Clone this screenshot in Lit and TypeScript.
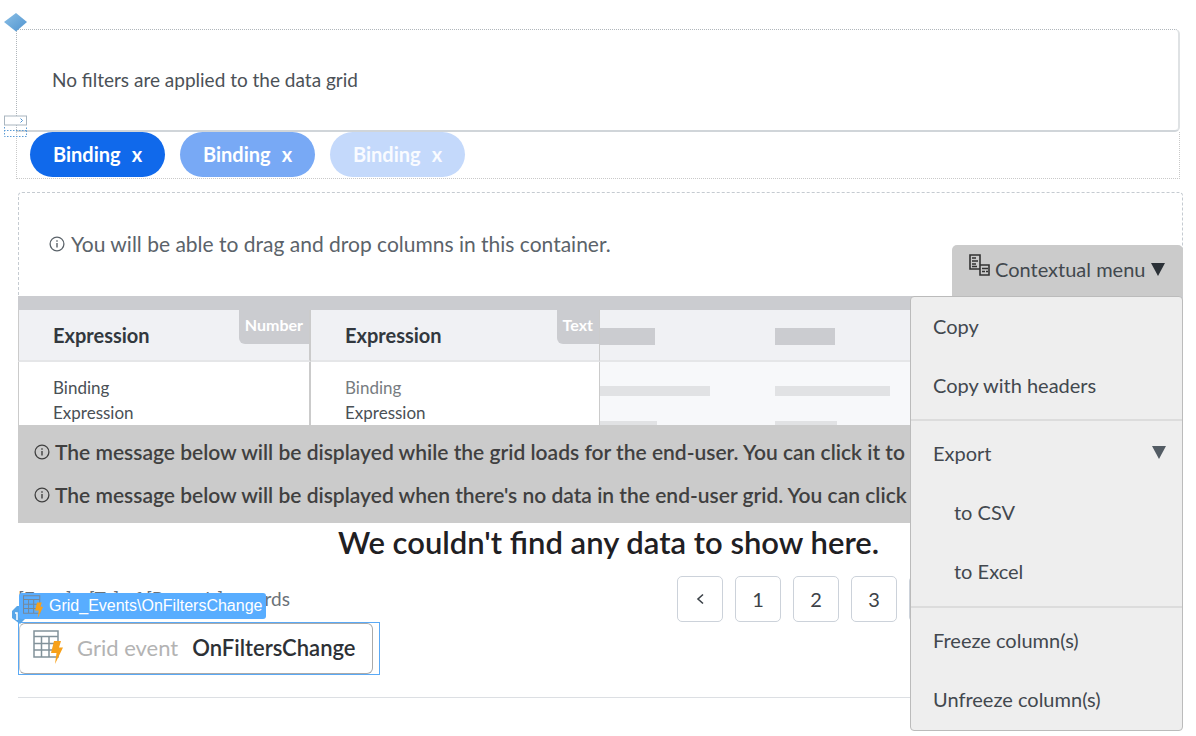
import { LitElement, html, css, svg } from "lit";
import { customElement } from "lit/decorators.js";

const infoIcon = html`<svg class="info" viewBox="0 0 16 16" aria-hidden="true">
  ${svg`<circle cx="8" cy="8" r="6.9" fill="none" stroke="currentColor" stroke-width="1.3"/>
  <path d="M8 7v4.6M8 4.2v1.5" stroke="currentColor" stroke-width="1.4"/>`}
</svg>`;

const gridEventIcon = (cls: string) => html`<svg class=${cls} viewBox="0 0 30 34" aria-hidden="true">
  ${svg`<path class="lines" d="M1 1H25V27H1ZM1 6.5H25M1 13.500H25M1 20H25M8.500 6.500V27M16 6.500V27" fill="none" stroke-width="1.5"/>
  <path d="M21 11H28L26 17.500H30L22 34L23.500 23H18Z" fill="#f7a11b" stroke="none"/>`}
</svg>`;

@customElement("filter-panel")
class FilterPanel extends LitElement {
  static styles = css`
    :host { display: block; position: relative; padding: 29px 16px 0 16px; }
    * { box-sizing: border-box; }
    .panel {
      height: 103px; padding: 0 35px 2px; display: flex; align-items: center;
      border: 1px dotted #b0b6bb; border-right: 2px solid #dfe2e4; border-bottom: 2px solid #d0d5d9;
      border-radius: 0 5px 5px 0; color: #4b5157; font-size: 19px;
    }
    .chips {
      display: flex; gap: 15px; padding: 0 13px; height: 47px;
      border: 1px dotted #c9c9c9; border-top: 0;
    }
    .chip {
      height: 45px; width: 135px; border: 0; border-radius: 23px; color: #fff;
      font: bold 20px "Lato", sans-serif; display: flex; align-items: center; gap: 11px;
      padding: 0 0 2px 23px; background: #1069eb;
    }
    .chip.mid { background: #78a9f5; }
    .chip.light { background: #c4d9fb; color: #f9fbff; }
    .anchor { position: absolute; left: 4px; top: 12px; width: 24px; height: 20px; }
    .handle { position: absolute; left: 4px; top: 115px; width: 24px; height: 22px; }
  `;
  render() {
    return html`
      <div class="panel">No filters are applied to the data grid</div>
      <div class="chips">
        <button class="chip">Binding <span>x</span></button>
        <button class="chip mid">Binding <span>x</span></button>
        <button class="chip light">Binding <span>x</span></button>
      </div>
      <svg class="anchor" viewBox="0 0 24 20" aria-hidden="true">
        <defs><linearGradient id="g" x1="0" y1="0" x2="1" y2="1">
          <stop offset="0" stop-color="#8cc0e6"/><stop offset="1" stop-color="#4f93cf"/>
        </linearGradient></defs>
        <path d="M12 1L23 10L12 19.500L0 10Z" fill="url(#g)"/>
      </svg>
      <svg class="handle" viewBox="0 0 24 22" aria-hidden="true">
        <rect x="0.500" y="1" width="22" height="9" fill="#fff" stroke="#a9b5bf"/>
        <path d="M16.500 3.500l2 2l-2 2" fill="none" stroke="#4a90d0"/>
        <path d="M0.500 12V21.500H22.500V12M0 15.500H23" fill="none" stroke="#5b9bd5" stroke-dasharray="1.500 1.500"/>
      </svg>`;
  }
}

@customElement("context-menu")
class ContextMenu extends LitElement {
  static styles = css`
    :host { display: block; }
    * { box-sizing: border-box; }
    button {
      border: 0; background: none; color: #42484e; font: 20px "Lato", sans-serif;
      display: flex; align-items: center; width: 100%; text-align: left;
    }
    .tab {
      margin-left: auto; width: 231px; height: 51px; padding: 0 18px 3px 16px; gap: 4px;
      background: #cbcbcb; border-radius: 5px 5px 0 0;
    }
    .copy { width: 23px; height: 24px; margin-bottom: 8px; }
    .arrow { width: 14px; height: 13px; margin-left: auto; fill: #2b3137; }
    .menu { width: 273px; background: #eee; border: 1px solid #bbb; border-radius: 4px; }
    .group { padding: 3px 0 5px; }
    .group + .group { border-top: 2px solid #dcdcdc; }
    .group:first-child { padding: 0 0 4px; }
    .group:last-child { padding-bottom: 1px; }
    .item { height: 59px; padding: 0 16px 2px 22px; }
    .item .arrow { fill: #535c64; }
    .sub { padding-left: 43px; }
  `;
  render() {
    const arrow = html`<svg class="arrow" viewBox="0 0 14 13"><path d="M0 0H14L7 13Z"/></svg>`;
    return html`
      <button class="tab">
        <svg class="copy" viewBox="0 0 23 24" aria-hidden="true">
          <path d="M2 2H12V16H2ZM4 5H8M4 8H10M4 11H8M4 13.500H9M12 12H21V22H12ZM14 15.500H20M14 18.500H17M18 18.500H20" fill="none" stroke="#333" stroke-width="1.600"/>
        </svg>
        <span>Contextual menu</span>${arrow}
      </button>
      <div class="menu">
        <div class="group">
          <button class="item">Copy</button>
          <button class="item">Copy with headers</button>
        </div>
        <div class="group">
          <button class="item">Export ${arrow}</button>
          <button class="item sub">to CSV</button>
          <button class="item sub">to Excel</button>
        </div>
        <div class="group">
          <button class="item">Freeze column(s)</button>
          <button class="item">Unfreeze column(s)</button>
        </div>
      </div>`;
  }
}

@customElement("data-grid")
class DataGrid extends LitElement {
  static styles = css`
    :host { display: block; }
    * { box-sizing: border-box; }
    .frame { overflow: hidden; border-top: 14px solid #cbccd0; background: #f7f8fa; }
    table { width: 100%; border-collapse: separate; border-spacing: 0; table-layout: fixed; }
    .first { width: 293px; }
    .second { width: 289px; }
    .third { width: 175px; }
    th, td { padding: 0; text-align: left; vertical-align: top; }
    th { height: 52px; background: #f0f1f4; border-bottom: 2px solid #e5e6e8; position: relative; }
    td { height: 63px; background: #f7f8fa; }
    .cell { border-right: 1px solid #cbcbcb; }
    .cell:first-child { border-left: 1px solid #cbcbcb; border-right-width: 2px; }
    .head { height: 50px; display: flex; align-items: center; padding-left: 34px; font-size: 20px; color: #32383e; }
    td.cell { background: #fff; color: #4a5056; font-size: 17px; line-height: 25px; padding: 13px 0 0 34px; }
    .soft { color: #777c81; }
    .tag {
      position: absolute; top: 0; right: 0; height: 34px; padding: 0 6px; line-height: 30px;
      background: #cbccd0; color: #fff; font-size: 16px; border-radius: 0 0 0 6px;
    }
    .bar { height: 17px; width: 60px; margin-top: 18px; background: #cbccd0; }
    .bar.cut { width: 55px; }
    .line { height: 10px; width: 115px; margin: 24px 0 25px; background: #e1e2e4; }
    .line.cut { width: 110px; }
    .line.short { height: 4px; width: 62px; margin: 0; }
    .line.short.cut { width: 57px; }
    .note {
      display: flex; align-items: center; gap: 5px; height: 43px; padding: 0 0 2px 16px; white-space: nowrap;
      color: #404040; font-size: 21px; font-weight: 600;
    }
    .notes { background: #cbcbcb; padding: 6px 0; overflow: hidden; }
    .info { width: 16px; height: 16px; flex: none; }
  `;
  render() {
    return html`
      <div class="frame">
        <table>
          <colgroup><col class="first"><col class="second"><col class="third"><col></colgroup>
          <thead><tr>
            <th class="cell"><div class="head">Expression</div><span class="tag">Number</span></th>
            <th class="cell"><div class="head">Expression</div><span class="tag">Text</span></th>
            <th><div class="bar cut"></div></th>
            <th><div class="bar"></div></th>
          </tr></thead>
          <tbody><tr>
            <td class="cell">Binding<br>Expression</td>
            <td class="cell"><span class="soft">Binding</span><br>Expression</td>
            <td><div class="line cut"></div><div class="line short cut"></div></td>
            <td><div class="line"></div><div class="line short"></div></td>
          </tr></tbody>
        </table>
      </div>
      <div class="notes">
        <div class="note">${infoIcon}The message below will be displayed while the grid loads for the end-user. You can click it to</div>
        <div class="note">${infoIcon}The message below will be displayed when there's no data in the end-user grid. You can click</div>
      </div>`;
  }
}

@customElement("app-root")
class AppRoot extends LitElement {
  static styles = css`
    :host { display: block; background: #fff; font-family: "Lato", sans-serif; overflow: hidden; }
    * { box-sizing: border-box; }
    .content { padding: 0 13px 0 18px; }
    .drop {
      position: relative; margin-top: 13px; height: 104px; padding: 0 30px 2px; display: flex; align-items: center;
      gap: 6px; border: 1px dashed #c5cbd1; border-bottom: 0; border-radius: 4px 4px 0 0;
      color: #5b636a; font-size: 21px;
    }
    .info { width: 16px; height: 16px; }
    context-menu { position: absolute; right: -1px; top: 52px; z-index: 2; width: 273px; }
    h1 { margin: 0; padding: 0 0 0 16px; text-align: center; font-size: 31px; line-height: 38px; font-weight: 600; color: #1f2023; }
    .foot { display: flex; margin-top: 15px; height: 46px; color: #6b7278; }
    .records { width: 659px; padding-top: 11px; font-size: 19px; line-height: 24px; white-space: nowrap; }
    .pages { display: flex; gap: 12px; }
    .page {
      width: 46px; height: 46px; border: 1px solid #ccd2da; border-radius: 5px; background: #fff;
      font: 20px "Lato", sans-serif; color: #3c4248; display: flex; align-items: center; justify-content: center; padding: 0;
    }
    .chev { width: 8px; height: 12px; }
    .event { position: relative; width: 362px; height: 53px; border: 1px solid #5aa9f5; }
    .card {
      width: 354px; height: 51px; border: 1px solid #aaa; border-left-color: #ccc; border-radius: 6px; background: #fff;
      display: flex; align-items: center; padding: 0 0 3px 13px; font-size: 22px; color: #b3b3b3; gap: 14px;
    }
    .card strong { color: #2d3136; font-weight: 600; }
    .big { width: 30px; height: 34px; stroke: #82929a; }
    .label {
      position: absolute; left: 0; top: -30px; height: 26px; width: 247px; background: #58adff; border-radius: 3px;
      display: flex; align-items: center; gap: 5px; padding-left: 3px; color: #fff;
      font: 16px "Liberation Sans", sans-serif; white-space: nowrap;
    }
    .small { width: 22px; height: 23px; stroke: #75889a; }
    .pin { position: absolute; left: -7px; top: -17px; width: 14px; height: 18px; }
    .rule { margin-top: 22px; border: 0; border-top: 1px solid #dcdfe3; margin-bottom: 38px; }
  `;
  render() {
    return html`
      <filter-panel></filter-panel>
      <main class="content">
        <div class="drop">${infoIcon}<span>You will be able to drag and drop columns in this container.</span>
          <context-menu></context-menu>
        </div>
        <data-grid></data-grid>
        <h1>We couldn't find any data to show here.</h1>
        <div class="foot">
          <div class="records">[From] - [To] of [Records] records</div>
          <div class="pages">
            <button class="page" aria-label="Previous page"><svg class="chev" viewBox="0 0 8 12"><path d="M7 1.500L2 6L7 10.500" fill="none" stroke="#3c4248" stroke-width="1.600"/></svg></button>
            <button class="page">1</button><button class="page">2</button><button class="page">3</button>
            <button class="page">4</button>
          </div>
        </div>
        <div class="event">
          <div class="card">${gridEventIcon("big")}<span>Grid event</span><strong>OnFiltersChange</strong></div>
          <svg class="pin" viewBox="0 0 14 18" aria-hidden="true"><path d="M0 5L5 0H14V12L8 18L0 12Z" fill="#58a6e8"/><path d="M3 7H5V14" fill="none" stroke="#fff" stroke-width="1.500"/></svg>
          <div class="label">${gridEventIcon("small")}Grid_Events\\OnFiltersChange</div>
        </div>
        <hr class="rule">
      </main>`;
  }
}
